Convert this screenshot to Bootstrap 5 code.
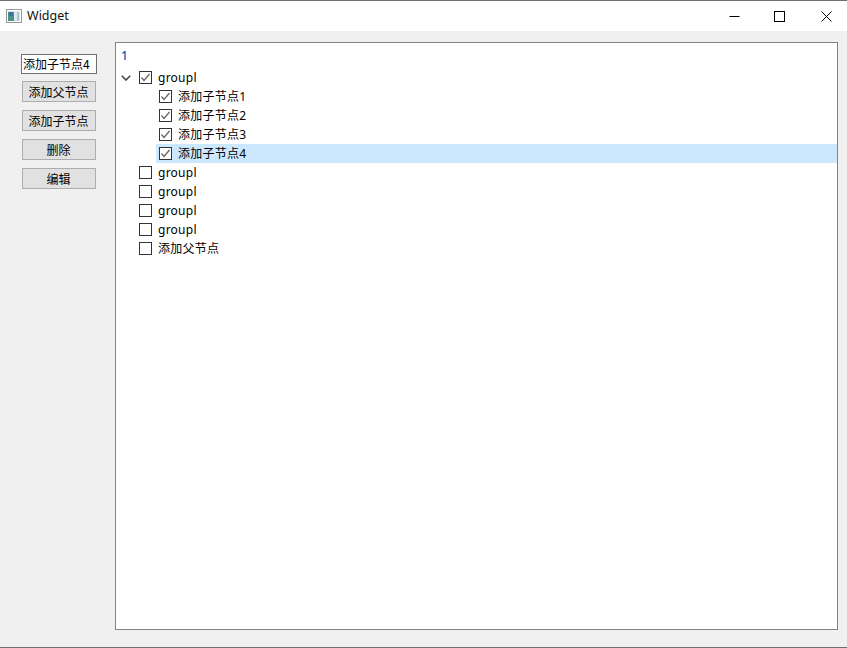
<!DOCTYPE html>
<html lang="zh">
<head>
<meta charset="utf-8">
<title>Widget</title>
<link href="https://cdn.jsdelivr.net/npm/bootstrap@5.3.0/dist/css/bootstrap.min.css" rel="stylesheet">
<style>
html,body{height:100%;margin:0;overflow:hidden}
body{background:#f0f0f0;font-family:"Noto Sans","Noto Sans CJK SC",sans-serif;font-size:12px;color:#000}
.win{height:648px;border-top:1px solid #6e6e6e;border-bottom:1px solid #6e6e6e}
.tbar{height:30px;background:#fff}
.ticon{margin:0 5px 0 6px;width:16px;height:14px;flex:none}
.ttitle{font-size:12.5px;color:#111;line-height:30px}
.wctl{margin-right:-2px}
.wbtn{width:46px;height:30px;border:0;background:none;padding:0}
.wbtn.mid{padding-right:2px}
.side{width:115px;padding:23px 0 0 21px}
.fld{width:76px;height:20px;border:1px solid #707070;background:#fff;line-height:18px;padding-left:1px;white-space:nowrap;overflow:hidden;margin-bottom:7px;font-family:"Noto Sans CJK SC",sans-serif}
.pbtn{width:74px;height:21px;margin:0 0 8px 1px;border:1px solid #adadad;background:#e1e1e1;padding:0 1px 0 0;font-size:12px;line-height:19px;color:#000;border-radius:0;font-family:"Noto Sans CJK SC",sans-serif;display:block}
.tree{width:723px;height:588px;margin-top:11px;background:#fff;border:1px solid #82828c}
.thead{height:25px;color:#0058c0;padding-left:5px;line-height:25px;font-size:12px;font-weight:500}
.trow{height:19px;line-height:19px;color:#000}
.trow.sub{padding-left:43px}
.trow.top{padding-left:23px}
.trow.sel{background:#cce8ff;margin-left:40px;padding-left:3px;width:681px}
.arrowwrap{padding-left:5px;width:23px;flex:none}
.cb{width:13px;height:13px;flex:none;border:1px solid #333;background:#fff;margin-right:6px;display:block}
.cbs{width:13px;height:13px;flex:none;margin-right:6px;display:block}
.rowtxt{white-space:nowrap;letter-spacing:.25px}
</style>
</head>
<body>
<svg width="0" height="0" class="d-none"><symbol id="chk" viewBox="0 0 13 13"><rect x=".5" y=".5" width="12" height="12" fill="#fff" stroke="#333"/><path d="M2.5 6.5L5 9.5 10.5 3" stroke="#666" stroke-width="1.3" fill="none"/></symbol></svg>
<div class="win d-flex flex-column">
  <div class="tbar d-flex align-items-center">
    <svg class="ticon" viewBox="0 0 16 14"><rect x=".5" y=".5" width="15" height="13" fill="#fff" stroke="#9a9a9a"/><rect x="2" y="2" width="12" height="10" fill="#dfe8ea"/><rect x="2" y="3" width="6" height="9" fill="#4e8f8a"/><rect x="3" y="3" width="4" height="4" fill="#3f6f9f"/><rect x="11" y="3" width="2" height="9" fill="#a9c4cc"/></svg>
    <div class="ttitle flex-grow-1">Widget</div>
    <div class="wctl d-flex">
    <button class="wbtn d-flex align-items-center justify-content-center" aria-label="min"><svg width="11" height="11" viewBox="0 0 11 11"><path d="M0.5 5.5H10.5" stroke="#000" fill="none"/></svg></button>
    <button class="wbtn mid d-flex align-items-center justify-content-center" aria-label="max"><svg width="11" height="11" viewBox="0 0 11 11"><rect x=".5" y=".5" width="10" height="10" stroke="#000" fill="none"/></svg></button>
    <button class="wbtn d-flex align-items-center justify-content-center" aria-label="close"><svg width="11" height="11" viewBox="0 0 11 11"><path d="M.5.5L10.5 10.5M10.5.5L.5 10.5" stroke="#000" fill="none"/></svg></button>
    </div>
  </div>
  <div class="d-flex flex-grow-1">
    <div class="side flex-shrink-0">
      <div class="fld">添加子节点4</div>
      <button class="pbtn">添加父节点</button>
      <button class="pbtn">添加子节点</button>
      <button class="pbtn">删除</button>
      <button class="pbtn">编辑</button>
    </div>
    <div class="tree">
      <div class="thead">1</div>
      <div class="trow d-flex align-items-center">
        <div class="arrowwrap d-flex align-items-center"><svg width="10" height="6" viewBox="0 0 10 6"><path d="M.8.8L5 5 9.2.8" stroke="#444" stroke-width="1.6" fill="none"/></svg></div>
        <svg class="cbs"><use href="#chk"/></svg><span class="rowtxt">groupl</span>
      </div>
      <div class="trow sub d-flex align-items-center"><svg class="cbs"><use href="#chk"/></svg><span class="rowtxt">添加子节点1</span></div>
      <div class="trow sub d-flex align-items-center"><svg class="cbs"><use href="#chk"/></svg><span class="rowtxt">添加子节点2</span></div>
      <div class="trow sub d-flex align-items-center"><svg class="cbs"><use href="#chk"/></svg><span class="rowtxt">添加子节点3</span></div>
      <div class="trow sel d-flex align-items-center"><svg class="cbs"><use href="#chk"/></svg><span class="rowtxt">添加子节点4</span></div>
      <div class="trow top d-flex align-items-center"><span class="cb"></span><span class="rowtxt">groupl</span></div>
      <div class="trow top d-flex align-items-center"><span class="cb"></span><span class="rowtxt">groupl</span></div>
      <div class="trow top d-flex align-items-center"><span class="cb"></span><span class="rowtxt">groupl</span></div>
      <div class="trow top d-flex align-items-center"><span class="cb"></span><span class="rowtxt">groupl</span></div>
      <div class="trow top d-flex align-items-center"><span class="cb"></span><span class="rowtxt">添加父节点</span></div>
    </div>
  </div>
</div>
<script src="https://cdn.jsdelivr.net/npm/bootstrap@5.3.0/dist/js/bootstrap.bundle.min.js"></script>
</body>
</html>
